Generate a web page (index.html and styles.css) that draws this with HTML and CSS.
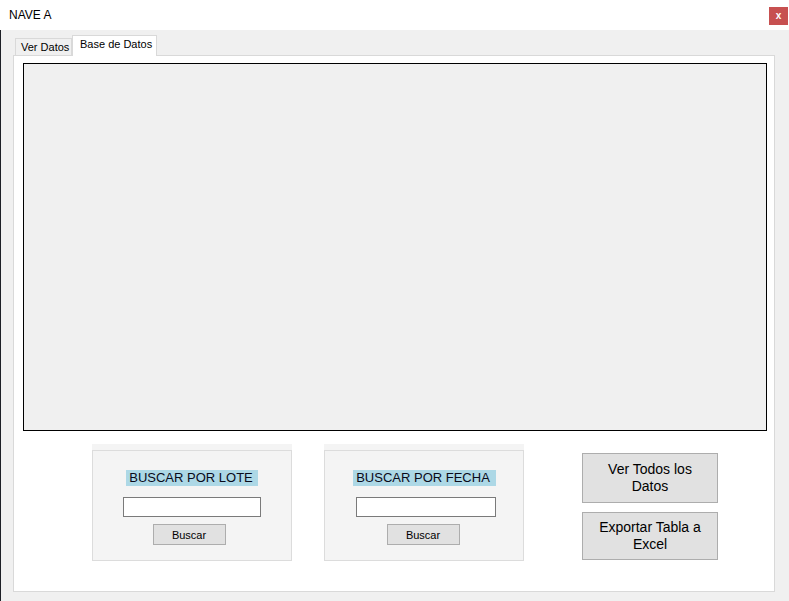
FILE: index.html
```html
<!DOCTYPE html>
<html lang="es">
<head>
<meta charset="utf-8">
<title>NAVE A</title>
<link rel="stylesheet" href="styles.css">
</head>
<body>
<div class="window">
  <div class="titlebar">
    <span class="title">NAVE A</span>
    <span class="close">x</span>
  </div>
  <div class="client">
    <div class="tabstrip">
      <div class="tab">Ver Datos</div>
      <div class="tab active">Base de Datos</div>
    </div>
    <div class="tabpage">
      <div class="grid"></div>
      <div class="bottom">
        <div class="group">
          <div class="group-inner">
            <span class="caption">BUSCAR POR LOTE</span>
            <input class="textbox textbox-lote" type="text">
            <button class="btn btn-small btn-lote">Buscar</button>
          </div>
        </div>
        <div class="group">
          <div class="group-inner">
            <span class="caption caption-fecha">BUSCAR POR FECHA</span>
            <input class="textbox textbox-fecha" type="text">
            <button class="btn btn-small btn-fecha">Buscar</button>
          </div>
        </div>
        <div class="actions">
          <button class="btn btn-big btn-ver">Ver Todos los<br>Datos</button>
          <button class="btn btn-big btn-exp">Exportar Tabla a<br>Excel</button>
        </div>
      </div>
    </div>
  </div>
</div>
</body>
</html>
```

FILE: styles.css
```css
* { box-sizing: border-box; }
html, body { margin: 0; padding: 0; }
body {
  font-family: "Liberation Sans", Arial, sans-serif;
  color: #000;
  background: #f0f0f0;
}
.window {
  width: 789px;
  height: 601px;
  background: #f0f0f0;
  overflow: hidden;
}
.titlebar {
  height: 30px;
  background: #fff;
  display: flex;
  justify-content: space-between;
  align-items: flex-start;
}
.title {
  font-size: 12px;
  margin: 8px 0 0 9px;
  line-height: 14px;
}
.close {
  width: 19px;
  height: 18px;
  margin: 7px 1px 0 0;
  background: #c75050;
  color: #fff;
  font-weight: bold;
  font-size: 10px;
  line-height: 17px;
  text-align: center;
}
.client {
  height: 571px;
  border-left: 1px solid #1d1f26;
  padding: 5px 0 0 12px;
}
.tabstrip {
  display: flex;
  align-items: flex-end;
  height: 20px;
  padding-left: 2px;
}
.tab {
  width: 57px;
  height: 17px;
  border: 1px solid #d9d9d9;
  border-bottom: none;
  background: #f0f0f0;
  font-size: 11px;
  line-height: 16px;
  padding-left: 5px;
}
.tab.active {
  width: 85px;
  height: 21px;
  margin-bottom: -1px;
  background: #fff;
  position: relative;
  z-index: 1;
  padding-left: 7px;
  line-height: 16px;
}
.tabpage {
  width: 762px;
  height: 537px;
  border: 1px solid #d9d9d9;
  background: #fff;
  padding: 7px 9px;
}
.grid {
  width: 744px;
  height: 368px;
  border: 1px solid #000;
  background: #f0f0f0;
}
.bottom {
  display: flex;
  align-items: flex-start;
  margin-top: 13px;
  padding-left: 69px;
}
.group {
  width: 200px;
  height: 117px;
  padding-top: 6px;
  background: #f4f4f4;
  margin-right: 32px;
}
.group + .group { margin-right: 58px; }
.group-inner {
  height: 111px;
  border: 1px solid #dcdcdc;
  display: flex;
  flex-direction: column;
  align-items: center;
  padding-top: 19px;
}
.caption {
  background: #add8e6;
  font-size: 13px;
  height: 16px;
  line-height: 16px;
  padding: 0 5px 0 3px;
  color: #0a0a1a;
}
.caption-fecha { padding: 0 6px 0 3px; margin-left: 1px; }
.textbox {
  margin: 11px 0 0 0;
  height: 20px;
  border: 1px solid #7a7a7a;
  background: #fff;
  padding: 0;
  font: inherit;
}
.textbox-lote { width: 138px; }
.textbox-fecha { width: 140px; margin-left: 3px; }
.btn {
  font-family: "Liberation Sans", Arial, sans-serif;
  background: #e1e1e1;
  border: 1px solid #adadad;
  color: #000;
  padding: 0;
  margin: 0;
}
.btn-small {
  width: 73px;
  height: 21px;
  margin-top: 7px;
  font-size: 11px;
}
.btn-lote { margin-right: 6px; }
.btn-fecha { margin-right: 2px; }
.actions {
  display: flex;
  flex-direction: column;
  gap: 9px;
  padding-top: 9px;
}
.btn-big {
  width: 136px;
  font-size: 14px;
  line-height: 17px;
}
.btn-ver { height: 50px; }
.btn-exp { height: 48px; }
```
